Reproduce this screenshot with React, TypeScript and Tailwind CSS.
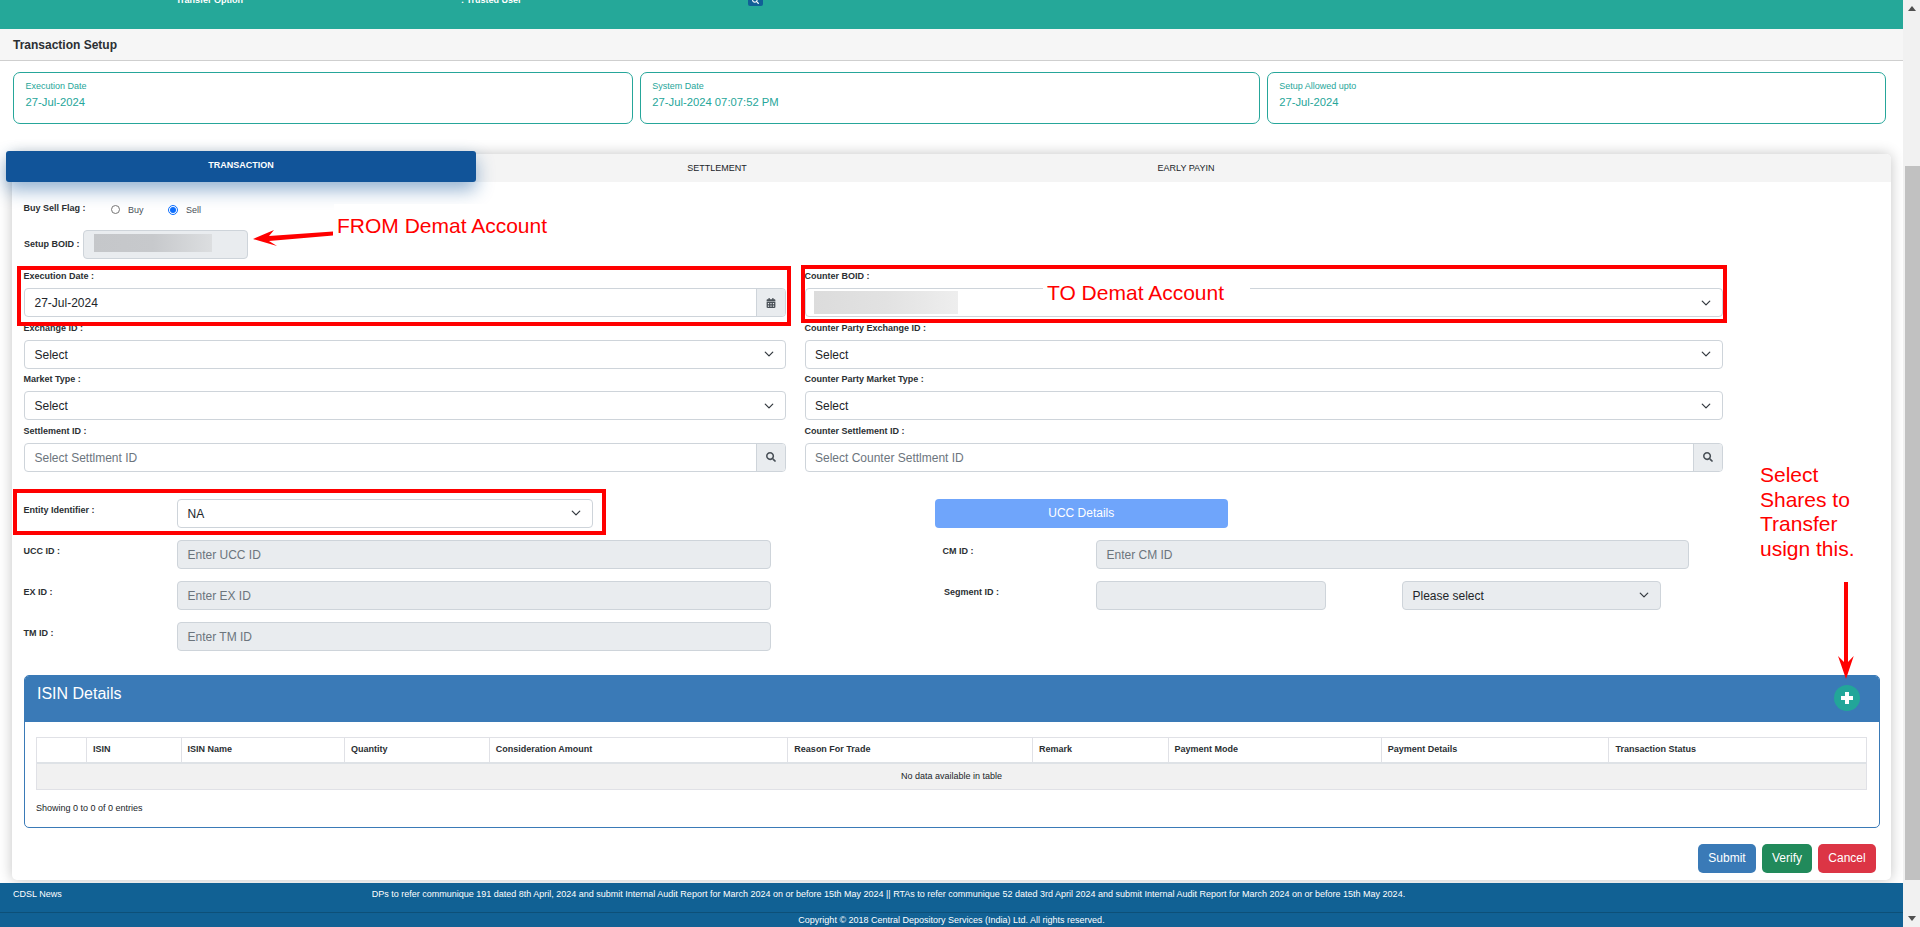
import React from "react";
import { FaCalendarAlt, FaSearch } from "react-icons/fa";

function Chevron() {
  return (
    <svg viewBox="0 0 16 16" className="h-[10px] w-[10px] shrink-0" fill="none" stroke="#343a40" strokeWidth="2" strokeLinecap="round" strokeLinejoin="round">
      <path d="m2 5 6 6 6-6" />
    </svg>
  );
}

function Label({ children, right = false }: { children: React.ReactNode; right?: boolean }) {
  return <div className={`h-[22.5px] pt-[4.5px] text-[9px] leading-[12px] font-bold text-[#2b2f33] whitespace-nowrap ${right ? "" : "-ml-[0.5px]"}`}>{children}</div>;
}

function SelectBox({ text, className = "", muted = false }: { text?: React.ReactNode; className?: string; muted?: boolean }) {
  return (
    <div className={`flex h-[29px] items-center justify-between rounded-[4px] border border-[#ced4da] pl-[9.5px] pr-[11px] text-[12px] text-[#212529] ${muted ? "bg-[#e9ecef]" : "bg-white"} ${className}`}>
      <span className="pt-px">{text}</span>
      <Chevron />
    </div>
  );
}

function DisabledInput({ text, className = "" }: { text?: string; className?: string }) {
  return (
    <div className={`flex h-[29px] items-center rounded-[4px] border border-[#ced4da] bg-[#e9ecef] pl-[9.5px] pt-px text-[12px] text-[#6c757d] ${className}`}>{text}</div>
  );
}

function AddonInput({ text, placeholder = false, icon }: { text: string; placeholder?: boolean; icon: React.ReactNode }) {
  return (
    <div className="flex h-[29px] overflow-hidden rounded-[4px] border border-[#ced4da] bg-white text-[12px]">
      <div className={`flex flex-1 items-center pl-[9.5px] pt-px ${placeholder ? "text-[#6c757d]" : "text-[#212529]"}`}>{text}</div>
      <div className="flex w-[29px] items-center justify-center border-l border-[#ced4da] bg-[#e9ecef] text-[#495057]">{icon}</div>
    </div>
  );
}

function InfoCard({ label, value }: { label: string; value: string }) {
  return (
    <div className="h-[52px] flex-1 rounded-[7px] border border-[#26a69a] pl-[11.5px] pt-[7px] text-[#26a69a]">
      <div className="text-[9px] leading-[12px]">{label}</div>
      <div className="mt-[3px] text-[11.25px] leading-[14px]">{value}</div>
    </div>
  );
}

function RowLabel({ children, className = "" }: { children: React.ReactNode; className?: string }) {
  return <div className={`shrink-0 pt-[5px] text-[9px] leading-[12px] font-bold text-[#2b2f33] whitespace-nowrap ${className}`}>{children}</div>;
}

const columns: { label: string; width: string }[] = [
  { label: "", width: "w-[50px]" },
  { label: "ISIN", width: "w-[94.6px]" },
  { label: "ISIN Name", width: "w-[163.4px]" },
  { label: "Quantity", width: "w-[144.7px]" },
  { label: "Consideration Amount", width: "w-[298.7px]" },
  { label: "Reason For Trade", width: "w-[244.6px]" },
  { label: "Remark", width: "w-[135.6px]" },
  { label: "Payment Mode", width: "w-[213.1px]" },
  { label: "Payment Details", width: "w-[227.8px]" },
  { label: "Transaction Status", width: "flex-1" },
];

export default function App() {
  return (
    <div className="relative flex h-[927px] w-full overflow-hidden bg-white font-['Liberation_Sans',Arial,sans-serif]">
      <div className="flex h-full w-[1903px] shrink-0 flex-col">
        {/* top band */}
        <div className="h-[29px] shrink-0 overflow-hidden bg-[#25a899]">
          <div className="-mt-[6px] flex h-[12px] pl-[176px] text-[9px] leading-[12px] font-bold text-white">
            <span className="w-[285px]">Transfer Option</span>
            <span className="w-[287px]">: Trusted User</span>
            <span className="flex h-[12px] w-[15px] items-center justify-center rounded-[2px] bg-[#115f97]">
              <FaSearch className="text-[7px] text-white" />
            </span>
          </div>
        </div>

        {/* transaction header */}
        <div className="flex h-[32px] shrink-0 items-center border-b border-[#cfcfcf] bg-[#f6f6f6] pl-[13px] pt-px text-[12px] font-bold text-[#2b2f33]">
          Transaction Setup
        </div>

        {/* info cards */}
        <div className="flex shrink-0 gap-[7px] pl-[13px] pr-[16.5px] pt-[11px]">
          <InfoCard label="Execution Date" value="27-Jul-2024" />
          <InfoCard label="System Date" value="27-Jul-2024 07:07:52 PM" />
          <InfoCard label="Setup Allowed upto" value="27-Jul-2024" />
        </div>

        {/* main card */}
        <div className="ml-[12px] mt-[30px] h-[726px] w-[1879px] shrink-0 rounded-[5px] bg-white shadow-[0_0_14px_rgba(0,0,0,0.24)]">
          {/* tabs */}
          <div className="flex h-[28px] rounded-t-[5px] bg-[#f4f4f4] text-[9px] text-[#212529]">
            <div className="-ml-[6px] -mt-[3px] flex h-[31px] w-[470px] items-center justify-center rounded-[3px] bg-[#115499] pb-[2px] font-bold text-white shadow-[0_8px_18px_rgba(17,84,153,0.45)]">
              TRANSACTION
            </div>
            <div className="flex w-[482px] items-center justify-center pt-[1px]">SETTLEMENT</div>
            <div className="flex w-[456px] items-center justify-center pt-[1px]">EARLY PAYIN</div>
          </div>

          <div className="pl-[12px]">
            {/* buy sell */}
            <div className="flex h-[47.5px] items-center pt-[6px] text-[9px]">
              <span className="-ml-[0.5px] w-[87.5px] font-bold text-[#2b2f33]">Buy Sell Flag :</span>
              <span className="mt-[2px] h-[9px] w-[9px] rounded-full border border-[#767676] bg-white" />
              <span className="ml-[8px] mt-[4px] w-[40px] text-[#495057]">Buy</span>
              <span className="mt-[2px] flex h-[10px] w-[10px] items-center justify-center rounded-full border border-[#0d6efd] bg-white">
                <span className="h-[6px] w-[6px] rounded-full bg-[#0d6efd]" />
              </span>
              <span className="ml-[8px] mt-[4px] text-[#495057]">Sell</span>
            </div>

            {/* setup boid */}
            <div className="flex h-[30px] items-center">
              <span className="w-[59px] text-[9px] font-bold text-[#2b2f33]">Setup BOID :</span>
              <div className="h-[29px] w-[165px] rounded-[4px] border border-[#ced4da] bg-[#e9ecef] pl-[10px] pt-[3px]">
                <div className="h-[18px] w-[118px] bg-gradient-to-r from-[#c5c7ca] via-[#c7c9cc] to-[#dcdee0]" />
              </div>
            </div>

            {/* two column fields */}
            <div className="mt-[6px] grid grid-cols-[762px_918.5px] gap-x-[18.5px]">
              <div>
                <Label>Execution Date :</Label>
                <AddonInput text="27-Jul-2024" icon={<FaCalendarAlt className="text-[10px]" />} />
              </div>
              <div>
                <Label right>Counter BOID :</Label>
                <div className="flex h-[29px] items-center justify-between rounded-[4px] border border-[#ced4da] bg-white pl-[8px] pr-[11px]">
                  <div className="h-[23px] w-[144px] bg-gradient-to-r from-[#dcdcdc] via-[#e2e2e2] to-[#eeeeee]" />
                  <Chevron />
                </div>
              </div>
              <div>
                <Label>Exchange ID :</Label>
                <SelectBox text="Select" />
              </div>
              <div>
                <Label right>Counter Party Exchange ID :</Label>
                <SelectBox text="Select" />
              </div>
              <div>
                <Label>Market Type :</Label>
                <SelectBox text="Select" />
              </div>
              <div>
                <Label right>Counter Party Market Type :</Label>
                <SelectBox text="Select" />
              </div>
              <div>
                <Label>Settlement ID :</Label>
                <AddonInput text="Select Settlment ID" placeholder icon={<FaSearch className="text-[10px]" />} />
              </div>
              <div>
                <Label right>Counter Settlement ID :</Label>
                <AddonInput text="Select Counter Settlment ID" placeholder icon={<FaSearch className="text-[10px]" />} />
              </div>
            </div>

            {/* entity rows */}
            <div className="mt-[27px] flex flex-col gap-[12px]">
              <div className="flex h-[29px]">
                <div className="flex w-[910.5px]">
                  <RowLabel className="-ml-[0.5px] w-[153.5px]">Entity Identifier :</RowLabel>
                  <SelectBox text="NA" className="w-[415.9px]" />
                </div>
                <div className="flex h-[29px] w-[293.5px] items-center justify-center rounded-[4px] bg-[#6fa5fb] text-[12px] text-white">UCC Details</div>
              </div>

              <div className="flex h-[29px]">
                <div className="flex w-[918.5px]">
                  <RowLabel className="-ml-[0.5px] w-[153.5px]">UCC ID :</RowLabel>
                  <DisabledInput text="Enter UCC ID" className="w-[593.5px]" />
                </div>
                <RowLabel className="w-[153.5px]">CM ID :</RowLabel>
                <DisabledInput text="Enter CM ID" className="w-[593px]" />
              </div>

              <div className="flex h-[29px]">
                <div className="flex w-[920px]">
                  <RowLabel className="-ml-[0.5px] w-[153.5px]">EX ID :</RowLabel>
                  <DisabledInput text="Enter EX ID" className="w-[593.5px]" />
                </div>
                <RowLabel className="w-[152px]">Segment ID :</RowLabel>
                <DisabledInput className="w-[230px]" />
                <SelectBox text="Please select" muted className="ml-[76px] w-[259px]" />
              </div>

              <div className="flex h-[29px]">
                <RowLabel className="-ml-[0.5px] w-[153.5px]">TM ID :</RowLabel>
                <DisabledInput text="Enter TM ID" className="w-[593.5px]" />
              </div>
            </div>

            {/* ISIN panel */}
            <div className="mt-[24px] h-[153px] w-[1856px] overflow-hidden rounded-[5px] border border-[#3a7ab7]">
              <div className="flex h-[46px] items-start justify-between bg-[#3a7ab7] pl-[12px] pr-[19.5px] text-white">
                <span className="mt-[8px] text-[16px] leading-[20px]">ISIN Details</span>
                <span className="mt-[9.5px] flex h-[26px] w-[26px] items-center justify-center rounded-full bg-[#22a699]">
                  <svg viewBox="0 0 12 12" className="h-[12px] w-[12px]" fill="#ffffff">
                    <path d="M4 0h4v4h4v4H8v4H4V8H0V4h4z" />
                  </svg>
                </span>
              </div>
              <div className="px-[11px] pt-[15px]">
                <div className="w-[1831px] border border-[#e0e1e6]">
                  <div className="flex h-[26px] border-b-2 border-[#dee2e6] text-[9px] font-bold text-[#2b2f33]">
                    {columns.map((c, i) => (
                      <div key={i} className={`flex items-center pl-[6px] ${c.width} ${i < columns.length - 1 ? "border-r border-[#e0e1e6]" : ""}`}>
                        {c.label}
                      </div>
                    ))}
                  </div>
                  <div className="flex h-[25.5px] items-center justify-center bg-[#f1f1f1] text-[9px] text-[#212529]">No data available in table</div>
                </div>
                <div className="mt-[11.5px] text-[9px] leading-[12px] text-[#212529]">Showing 0 to 0 of 0 entries</div>
              </div>
            </div>

            {/* actions */}
            <div className="mt-[16px] flex w-[1852px] justify-end gap-[6px] text-[12px] text-white">
              <div className="flex h-[29px] w-[58px] items-center justify-center rounded-[5px] bg-[#3a7ab7]">Submit</div>
              <div className="flex h-[29px] w-[50px] items-center justify-center rounded-[5px] bg-[#218a5b]">Verify</div>
              <div className="flex h-[29px] w-[58px] items-center justify-center rounded-[5px] bg-[#dc3545]">Cancel</div>
            </div>
          </div>
        </div>

        {/* footer */}
        <div className="relative z-10 mt-[3px] flex flex-1 flex-col bg-[#116194] text-[9px] text-white">
          <div className="relative flex h-[30px] border-b border-[#0d5078]">
            <span className="pl-[13px] pt-[5px] leading-[12px]">CDSL News</span>
            <span className="ml-[310px] pt-[5px] leading-[12px] whitespace-nowrap">
              DPs to refer communique 191 dated 8th April, 2024 and submit Internal Audit Report for March 2024 on or before 15th May 2024 || RTAs to refer communique 52 dated 3rd April 2024 and submit Internal Audit Report for March 2024 on or before 15th May 2024.
            </span>
          </div>
          <div className="flex flex-1 items-center justify-center leading-[12px]">Copyright © 2018 Central Depository Services (India) Ltd. All rights reserved.</div>
        </div>
      </div>

      {/* scrollbar */}
      <div className="flex h-full flex-1 flex-col items-center bg-[#f1f1f1]">
        <div className="flex h-[17px] w-full items-center justify-center">
          <div className="h-0 w-0 border-x-[4px] border-b-[5px] border-x-transparent border-b-[#505050]" />
        </div>
        <div className="mt-[149px] ml-[2px] h-[714px] w-[15px] bg-[#c1c1c1]" />
        <div className="mt-[30px] flex h-[17px] w-full items-center justify-center">
          <div className="h-0 w-0 border-x-[4px] border-t-[5px] border-x-transparent border-t-[#505050]" />
        </div>
      </div>

      {/* annotations drawn over the page */}
      <div className="absolute left-[17px] top-[266px] h-[60px] w-[774px] border-[4px] border-[#ff0000]" />
      <div className="absolute left-[800.5px] top-[265px] h-[58px] w-[926.5px] border-[4px] border-[#ff0000]" />
      <div className="absolute left-[13px] top-[489px] h-[46px] w-[593px] border-[4px] border-[#ff0000]" />

      <div className="absolute left-[334px] top-[204px] w-[225px] bg-white pl-[3px] pt-[9px] text-[21px] leading-[26px] text-[#ff0000]">FROM Demat Account</div>
      <svg className="absolute left-[240px] top-[225px]" width="100" height="25" viewBox="240 225 100 25">
        <polygon points="253,239 274,230 269,236 333,231.5 333,235.5 269,241 277,246" fill="#ff0000" />
      </svg>

      <div className="absolute left-[1043px] top-[282px] w-[207px] bg-white pl-[4px] text-[21px] leading-[22px] text-[#ff0000]">TO Demat Account</div>

      <div className="absolute left-[1760px] top-[463px] w-[100px] text-[21px] leading-[24.7px] text-[#ff0000]">
        Select Shares to Transfer usign this.
      </div>
      <svg className="absolute left-[1836px] top-[580px]" width="20" height="100" viewBox="1836 580 20 100">
        <polygon points="1844,582 1848,582 1848,662 1853.7,656 1846,679 1838,656 1844,662" fill="#ff0000" />
      </svg>
    </div>
  );
}
